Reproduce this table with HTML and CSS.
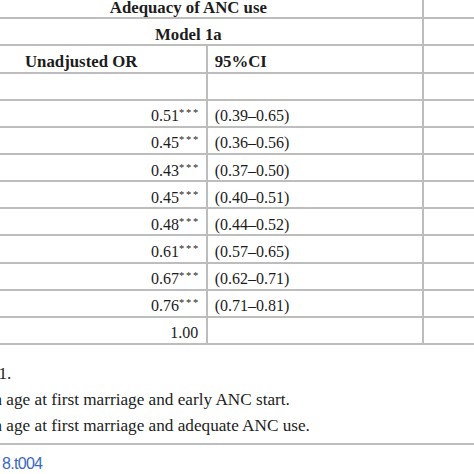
FILE: index.html
```html
<!DOCTYPE html>
<html>
<head>
<meta charset="utf-8">
<link rel="stylesheet" href="styles.css">
</head>
<body>
<div class="page">
  <div class="grid">
    <div class="cell span2 bold">Adequacy of ANC use</div>
    <div class="cell c3"></div>

    <div class="cell span2 bold">Model 1a</div>
    <div class="cell c3"></div>

    <div class="cell c1 head bold">Unadjusted OR</div>
    <div class="cell c2 bold">95%CI</div>
    <div class="cell c3"></div>

    <div class="cell c1"></div>
    <div class="cell c2"></div>
    <div class="cell c3"></div>

    <div class="cell c1 num">0.51<sup>***</sup></div>
    <div class="cell c2">(0.39–0.65)</div>
    <div class="cell c3"></div>

    <div class="cell c1 num">0.45<sup>***</sup></div>
    <div class="cell c2">(0.36–0.56)</div>
    <div class="cell c3"></div>

    <div class="cell c1 num">0.43<sup>***</sup></div>
    <div class="cell c2">(0.37–0.50)</div>
    <div class="cell c3"></div>

    <div class="cell c1 num">0.45<sup>***</sup></div>
    <div class="cell c2">(0.40–0.51)</div>
    <div class="cell c3"></div>

    <div class="cell c1 num">0.48<sup>***</sup></div>
    <div class="cell c2">(0.44–0.52)</div>
    <div class="cell c3"></div>

    <div class="cell c1 num">0.61<sup>***</sup></div>
    <div class="cell c2">(0.57–0.65)</div>
    <div class="cell c3"></div>

    <div class="cell c1 num">0.67<sup>***</sup></div>
    <div class="cell c2">(0.62–0.71)</div>
    <div class="cell c3"></div>

    <div class="cell c1 num">0.76<sup>***</sup></div>
    <div class="cell c2">(0.71–0.81)</div>
    <div class="cell c3"></div>

    <div class="cell c1 num">1.00</div>
    <div class="cell c2"></div>
    <div class="cell c3"></div>
  </div>

  <div class="notes">
    <div class="note first">p &lt; 0.001.</div>
    <div class="note">between age at first marriage and early ANC start.</div>
    <div class="note">between age at first marriage and adequate ANC use.</div>
  </div>

  <div class="doi"><a class="doi-link" href="#">8.t004</a></div>
</div>
</body>
</html>
```

FILE: styles.css
```css
html, body {
  margin: 0;
  padding: 0;
  background: #ffffff;
}

.page {
  width: 474px;
  height: 474px;
  overflow: hidden;
  font-family: "Liberation Serif", "Times New Roman", serif;
  font-size: 16px;
  color: #1c1c1c;
}

.grid {
  display: grid;
  grid-template-columns: 205.7px 216px 1fr;
  margin-top: -7.85px;
}

.cell {
  box-sizing: border-box;
  height: 27.15px;
  border-bottom: 2px solid #bdbdbd;
  padding-top: 6.5px;
  line-height: 17px;
  white-space: nowrap;
}

.bold {
  font-weight: bold;
  font-size: 16.8px;
}

.span2 {
  grid-column: span 2;
  text-align: center;
  padding-right: 45px;
}

.c2 {
  border-left: 2px solid #bdbdbd;
  padding-left: 7px;
}

.c3 {
  border-left: 2px solid #bdbdbd;
}

.head {
  padding-left: 25px;
}

.num {
  text-align: right;
  padding-right: 7.4px;
}

.num sup {
  font-size: 10.5px;
  line-height: 0;
  letter-spacing: 1.8px;
  margin-right: -1.8px;
  vertical-align: 5px;
}

.notes {
  margin-top: 16px;
  padding-bottom: 4px;
  border-bottom: 2px solid #bdbdbd;
  font-size: 17.2px;
}

.note {
  line-height: 26px;
  white-space: nowrap;
  text-indent: -55.2px;
  color: #222222;
}

.note.first {
  text-indent: -58.5px;
}

.doi {
  margin-top: 9.5px;
  padding-left: 2px;
  line-height: 20px;
}

.doi-link {
  font-family: "Liberation Sans", Arial, sans-serif;
  font-size: 16px;
  letter-spacing: -0.7px;
  color: #3a68c4;
  text-decoration: none;
}
```
